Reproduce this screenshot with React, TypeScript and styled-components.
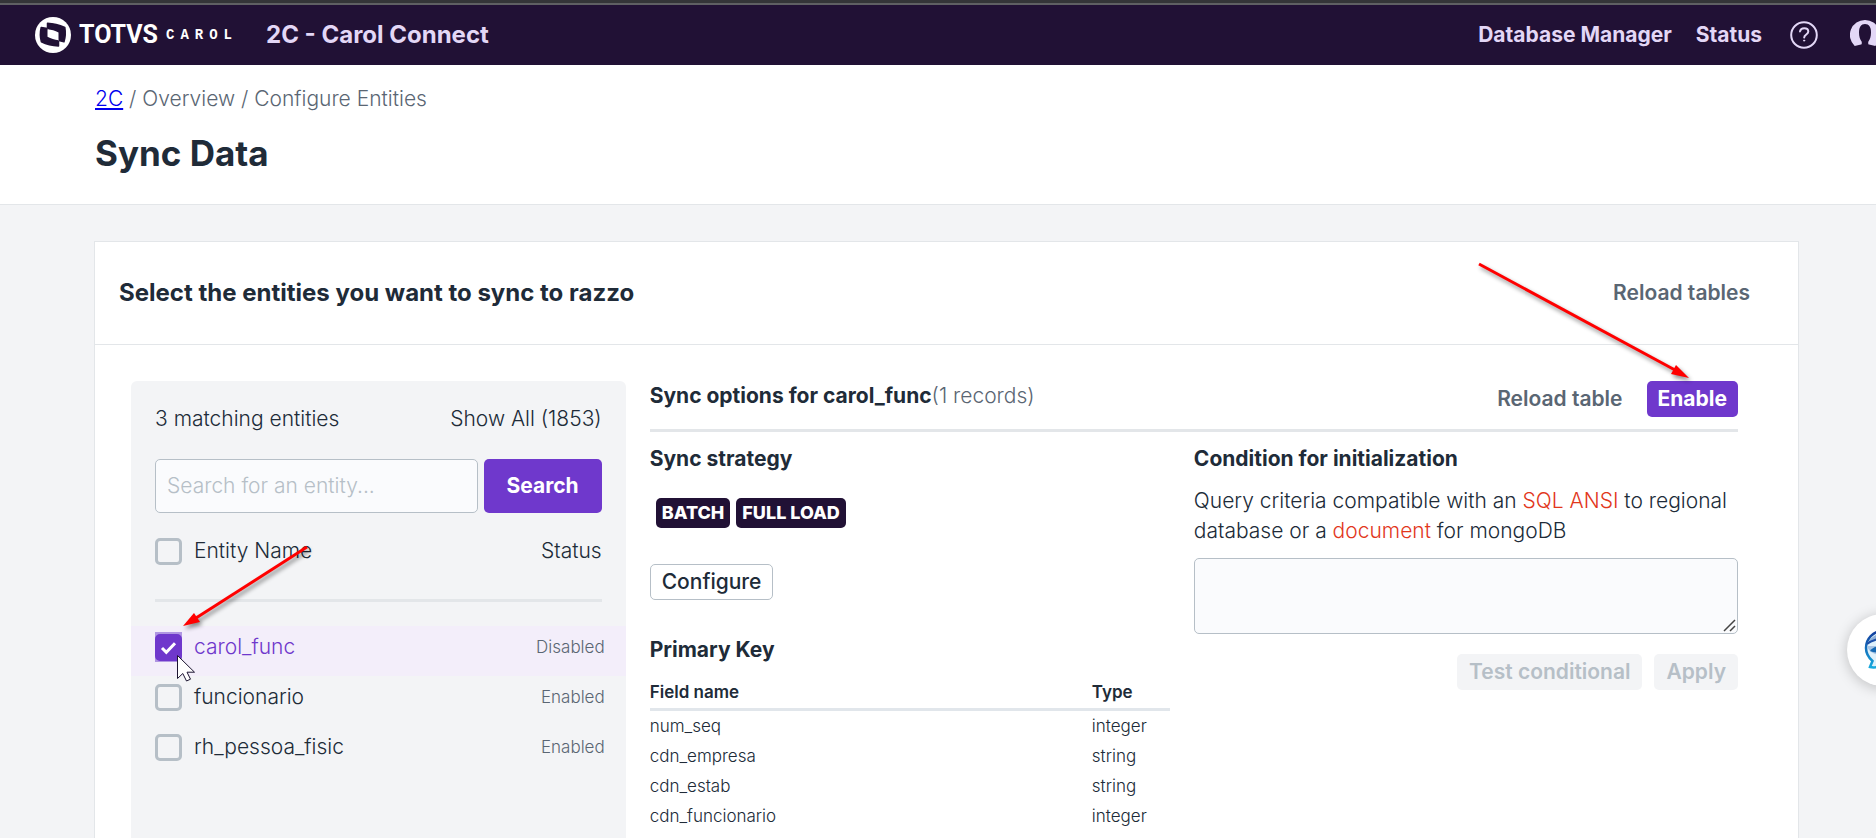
import React from 'react';
import styled, { createGlobalStyle } from 'styled-components';

const color = {
  ink: '#202b38',
  muted: '#5a6673',
  line: '#e3e6e9',
  border: '#b6bfc7',
  canvas: '#f3f4f6',
  field: '#fafbfd',
  purple: '#6f38cc',
  night: '#211135',
  lilac: '#e3d7f6',
  danger: '#e2371c',
};

const GlobalStyle = createGlobalStyle`
  *, *::before, *::after { box-sizing: border-box; }
  body {
    margin: 0;
    background: ${color.canvas};
    color: ${color.ink};
    font-family: Inter, "Liberation Sans", sans-serif;
    font-size: 21px;
    line-height: 30px;
    font-weight: 350;
  }
  h1, h2, h3, p { margin: 0; }
  button, input, textarea { font: inherit; color: inherit; }
`;

const Page = styled.div`
  position: relative;
  display: flex;
  flex-direction: column;
  min-height: 100vh;
  overflow: hidden;
`;

const WindowEdge = styled.div`
  height: 5px;
  background: #343538;
  border-bottom: 2px solid #5f6063;
`;

const TopBar = styled.header`
  display: flex;
  align-items: center;
  height: 60px;
  padding-left: 35px;
  background: ${color.night};
  color: ${color.lilac};
`;

const Brand = styled.a`
  display: flex;
  align-items: center;
  gap: 8px;
  color: #fff;
  text-decoration: none;
`;

const BrandName = styled.span`
  font: 700 25px/30px Roboto, sans-serif;
`;

const BrandProduct = styled.span`
  font: 700 14px/30px "Liberation Mono", monospace;
  letter-spacing: 6px;
`;

const AppName = styled.span`
  margin-left: 28px;
  font-size: 24px;
  font-weight: 700;
`;

const Nav = styled.nav`
  display: flex;
  align-items: center;
  gap: 24px;
  margin-left: auto;
  margin-right: -4px;
`;

const NavLink = styled.a`
  color: inherit;
  font-weight: 700;
  text-decoration: none;
`;

const NavIcon = styled.button`
  display: flex;
  margin-left: 4px;
  padding: 0;
  border: 0;
  background: none;
  color: inherit;

  & + & { margin-left: 8px; }
`;

const PageHead = styled.div`
  height: 140px;
  padding: 19px 95px 0;
  background: #fff;
  border-bottom: 1px solid ${color.line};
`;

const Crumbs = styled.nav`
  color: ${color.muted};
`;

const CrumbLink = styled.a`
  color: #0000ee;
`;

const PageTitle = styled.h1`
  margin-top: 19px;
  font-size: 35px;
  line-height: 40px;
  font-weight: 700;
`;

const Card = styled.main`
  display: flex;
  flex-direction: column;
  flex: 1;
  margin: 36px 77px 0 94px;
  background: #fff;
  border: 1px solid ${color.line};
  border-bottom: 0;
`;

const CardHead = styled.div`
  display: flex;
  align-items: center;
  justify-content: space-between;
  height: 103px;
  padding: 0 48px 0 24px;
  border-bottom: 1px solid ${color.line};
`;

const CardTitle = styled.h2`
  font-size: 24px;
  font-weight: 700;
`;

const CardBody = styled.div`
  display: grid;
  flex: 1;
  grid-template-columns: minmax(0, 5fr) minmax(0, 11fr);
  gap: 24px;
  padding: 36px 60px 0 36px;
`;

const Button = styled.button<{ $kind: 'plain' | 'primary' | 'outline' }>`
  height: 36px;
  padding: 0 ${(p) => (p.$kind === 'plain' ? 0 : 11)}px;
  border: ${(p) => (p.$kind === 'outline' ? `1px solid ${color.border}` : '0')};
  border-radius: 5px;
  background: ${(p) => (p.$kind === 'primary' ? color.purple : p.$kind === 'outline' ? '#fff' : 'none')};
  color: ${(p) => (p.$kind === 'primary' ? '#fff' : p.$kind === 'outline' ? color.ink : color.muted)};
  font-weight: ${(p) => (p.$kind === 'primary' ? 700 : p.$kind === 'outline' ? 500 : 600)};
  line-height: 30px;
  white-space: nowrap;

  &:disabled {
    padding: 0 12px;
    background: ${color.canvas};
    color: ${color.border};
  }
`;

const EntityPanel = styled.section`
  padding-top: 23px;
  background: ${color.canvas};
  border-radius: 6px 6px 0 0;
`;

const PanelRow = styled.div`
  display: flex;
  align-items: center;
  justify-content: space-between;
  margin: 0 24px;
`;

const ShowAll = styled.button`
  padding: 0;
  border: 0;
  background: none;
`;

const SearchForm = styled.form`
  display: flex;
  gap: 6px;
  margin: 25px 24px 0;
`;

const SearchInput = styled.input`
  flex: 1;
  min-width: 0;
  height: 54px;
  padding: 0 11px 2px;
  border: 1px solid ${color.border};
  border-radius: 5px;
  background: ${color.field};
  outline: 0;

  &::placeholder { color: ${color.border}; opacity: 1; }
`;

const SearchButton = styled(Button)`
  height: 54px;
  padding: 0 23px;
`;

const ListHead = styled(PanelRow)`
  height: 89px;
  padding-bottom: 11px;
  border-bottom: 3px solid ${color.line};
  margin-bottom: 24px;
`;

const EntityRow = styled.div<{ $active?: boolean }>`
  display: flex;
  align-items: center;
  justify-content: space-between;
  height: 50px;
  padding: 0 21px 8px 24px;
  background: ${(p) => (p.$active ? '#f3eefa' : 'none')};
  color: ${(p) => (p.$active ? color.purple : color.ink)};
`;

const CheckLabel = styled.label`
  display: flex;
  align-items: center;
  gap: 12px;
`;

const CheckFrame = styled.span<{ $active?: boolean }>`
  position: relative;
  display: flex;
  padding: 2px 0 1px;
  background: ${(p) => (p.$active ? '#b096e2' : 'none')};
`;

const CheckBox = styled.input`
  appearance: none;
  width: 27px;
  height: 27px;
  margin: 0;
  border: 3px solid ${color.border};
  border-radius: 5px;
  background: ${color.canvas};

  &:checked {
    border-color: ${color.purple};
    background: ${color.purple};
  }
`;

const CheckMark = styled.svg`
  position: absolute;
  top: 2px;
  left: 0;
  pointer-events: none;
`;

const EntityStatus = styled.span`
  color: ${color.muted};
  font-size: 17px;
`;

const Options = styled.section``;

const OptionsHead = styled.div`
  display: flex;
  align-items: flex-start;
  justify-content: space-between;
  height: 51px;
  border-bottom: 3px solid ${color.line};
`;

const OptionsActions = styled.div`
  display: flex;
  gap: 24px;
`;

const SubTitle = styled.h3`
  font-size: 21px;
  line-height: 30px;
  font-weight: 650;
`;

const Records = styled.span`
  color: ${color.muted};
  font-weight: 350;
`;

const OptionsColumns = styled.div`
  display: grid;
  grid-template-columns: minmax(0, 1fr) minmax(0, 1fr);
  padding-top: 12px;
`;

const Strategy = styled.div`
  padding-right: 24px;
`;

const Badges = styled.div`
  display: flex;
  gap: 6px;
  margin: 24px 0 36px 6px;
`;

const Badge = styled.span`
  padding: 0 6px;
  border-radius: 5px;
  background: ${color.night};
  color: #fff;
  font-size: 18px;
  font-weight: 800;
`;

const KeyTitle = styled(SubTitle)`
  margin-top: 35px;
`;

const KeyTable = styled.table`
  width: 100%;
  margin-top: 12px;
  border-collapse: separate;
  border-spacing: 0;
  table-layout: fixed;
  font-size: 17px;
  line-height: 30px;
  font-weight: 300;
  text-align: left;

  th {
    height: 34px;
    padding: 0;
    border-bottom: 3px solid #e1e6eb;
    font-weight: 600;
    vertical-align: top;
  }
  th:first-child { width: 85%; }
  td { height: 30px; padding: 0; }
`;

const Hint = styled.p`
  margin-top: 12px;
`;

const HintLink = styled.a`
  color: ${color.danger};
  text-decoration: none;
`;

const ConditionInput = styled.textarea`
  display: block;
  width: 100%;
  height: 76px;
  margin-top: 12px;
  padding: 8px 12px;
  border: 1px solid ${color.border};
  border-radius: 5px;
  background: ${color.field};
  resize: vertical;

  &::-webkit-resizer {
    background: url("data:image/svg+xml,%3Csvg xmlns='http://www.w3.org/2000/svg' width='15' height='15'%3E%3Cpath d='M2 13L13 2M8 13l5-5' stroke='%23444' stroke-width='1.500'/%3E%3C/svg%3E") no-repeat;
  }
`;

const ConditionActions = styled.div`
  display: flex;
  justify-content: flex-end;
  gap: 12px;
  margin-top: 20px;
`;

const ChatButton = styled.button`
  position: absolute;
  top: 614px;
  right: -43px;
  width: 72px;
  height: 72px;
  padding: 0;
  border: 0;
  border-radius: 50%;
  background: #fff;
  box-shadow: 0 2px 14px rgba(0, 0, 0, 0.22);
`;

const Overlay = styled.svg<{ $x: number; $y: number; $fromRight?: boolean }>`
  position: absolute;
  top: ${(p) => p.$y}px;
  ${(p) => (p.$fromRight ? 'right' : 'left')}: ${(p) => p.$x}px;
  overflow: visible;
  pointer-events: none;
`;

const RedArrow = styled(Overlay)`
  filter: drop-shadow(2px 3px 2px rgba(0, 0, 0, 0.45));
`;

const entities = [
  { name: 'carol_func', status: 'Disabled', active: true },
  { name: 'funcionario', status: 'Enabled', active: false },
  { name: 'rh_pessoa_fisic', status: 'Enabled', active: false },
];

const keys = [
  ['num_seq', 'integer'],
  ['cdn_empresa', 'string'],
  ['cdn_estab', 'string'],
  ['cdn_funcionario', 'integer'],
];

const BrandMark = () => (
  <svg width="36" height="36" viewBox="0 0 36 36" aria-hidden="true">
    <circle cx="18" cy="18" r="18" fill="#fff" />
    <g fill="none" stroke={color.night} strokeWidth="1.5" strokeLinejoin="round">
      <path d="M12.5 11.5V6.2c6 .2 11.500 1.600 17.300 4.200.8 4.800.7 9.500-.8 14.300l-5-1.200" fill={color.night} />
      <path d="M12.500 11.500L6.200 10.500c-1.200 5-1.200 9.500.2 14.200 5.600 2.700 11 3.900 17.100 4.300v-5.500" fill={color.night} />
    </g>
    <path d="M12.500 12.300c4 .4 7.500 1.500 11 3.200v7.800c-4-.7-7.500-1.800-11-3.600z" fill="#fff" />
  </svg>
);

const HelpIcon = () => (
  <svg width="28" height="28" viewBox="0 0 28 28" fill="none" stroke="currentColor" strokeLinecap="round" aria-hidden="true">
    <circle cx="14" cy="14" r="12.800" strokeWidth="2" />
    <path d="M10 10.400c.4-2 2-3.200 4.200-3.200 2.400 0 4.100 1.400 4.100 3.400 0 3-4.100 2.900-4.100 6" strokeWidth="2" />
    <circle cx="14.100" cy="19.600" r=".6" strokeWidth="1" fill="currentColor" />
  </svg>
);

const UserIcon = () => (
  <svg width="30" height="30" viewBox="0 0 30 30" aria-hidden="true">
    <path
      fill="currentColor"
      d="M15 0a15 15 0 0 0-10.300 26l6.300-1.400c.9-.3 1-1.800.6-3C10 19.500 9 16.500 9 12.500 9 7 11 4 15 4s6 3 6 8.500c0 4-1 7-2.600 9.100-.4 1.200-.3 2.700.6 3l6.300 1.400A15 15 0 0 0 15 0z"
    />
  </svg>
);

const ChatFace = () => (
  <svg width="72" height="72" viewBox="0 0 72 72" aria-hidden="true">
    <defs>
      <linearGradient id="face" x1="0" y1="0" x2="0" y2="1">
        <stop offset="0" stopColor="#123b9c" />
        <stop offset="1" stopColor="#16a9dd" />
      </linearGradient>
    </defs>
    <path
      d="M36 17c-10 0-17 8-17 17 0 6 3 10 6.500 13L23 53c6 1.500 9-1 13-1 10 0 17-8 17-18s-7-17-17-17z"
      fill="#dff1fb"
      stroke="url(#face)"
      strokeWidth="2.500"
    />
    <path d="M20 30c4-8 10-10 16-11v5c-6 1-12 3-16 6z" fill="#8fb0d8" />
    <path d="M20 30c5-4 10-5 16-6" fill="none" stroke="#1d4fa8" strokeWidth="2" />
    <path d="M20 32h16v9c-7 0-14-2-16-9z" fill="#a9c5e4" />
    <path d="M23 37c4-5 9-5 13-4v5c-5 1-9 1-13-1z" fill="#1468b3" />
  </svg>
);

const EntityCheck = ({ id, checked }: { id: string; checked?: boolean }) => (
  <CheckFrame $active={checked}>
    <CheckBox id={id} type="checkbox" defaultChecked={checked} />
    {checked && (
      <CheckMark width="27" height="27" viewBox="0 0 27 27">
        <path d="M7 14l4.300 4.300 8.700-9" fill="none" stroke="#fff" strokeWidth="3" />
      </CheckMark>
    )}
  </CheckFrame>
);

export default function App() {
  return (
    <>
      <GlobalStyle />
      <Page>
        <WindowEdge />
        <TopBar>
          <Brand href="#home">
            <BrandMark />
            <BrandName>TOTVS</BrandName>
            <BrandProduct>CAROL</BrandProduct>
          </Brand>
          <AppName>2C - Carol Connect</AppName>
          <Nav aria-label="Main">
            <NavLink href="#databases">Database Manager</NavLink>
            <NavLink href="#status">Status</NavLink>
            <NavIcon type="button" aria-label="Help">
              <HelpIcon />
            </NavIcon>
            <NavIcon type="button" aria-label="Account">
              <UserIcon />
            </NavIcon>
          </Nav>
        </TopBar>

        <PageHead>
          <Crumbs aria-label="Breadcrumb">
            <CrumbLink href="#2c">2C</CrumbLink> / Overview / Configure Entities
          </Crumbs>
          <PageTitle>Sync Data</PageTitle>
        </PageHead>

        <Card>
          <CardHead>
            <CardTitle>Select the entities you want to sync to razzo</CardTitle>
            <Button type="button" $kind="plain">Reload tables</Button>
          </CardHead>

          <CardBody>
            <EntityPanel aria-label="Entities">
              <PanelRow>
                <span>3 matching entities</span>
                <ShowAll type="button">Show All (1853)</ShowAll>
              </PanelRow>
              <SearchForm onSubmit={(e) => e.preventDefault()}>
                <SearchInput type="text" aria-label="Search for an entity" placeholder="Search for an entity..." />
                <SearchButton type="submit" $kind="primary">Search</SearchButton>
              </SearchForm>
              <ListHead>
                <CheckLabel htmlFor="all">
                  <EntityCheck id="all" />
                  Entity Name
                </CheckLabel>
                <span>Status</span>
              </ListHead>
              {entities.map((e) => (
                <EntityRow key={e.name} $active={e.active}>
                  <CheckLabel htmlFor={e.name}>
                    <EntityCheck id={e.name} checked={e.active} />
                    {e.name}
                  </CheckLabel>
                  <EntityStatus>{e.status}</EntityStatus>
                </EntityRow>
              ))}
            </EntityPanel>

            <Options>
              <OptionsHead>
                <SubTitle>
                  Sync options for carol_func<Records>(1 records)</Records>
                </SubTitle>
                <OptionsActions>
                  <Button type="button" $kind="plain">Reload table</Button>
                  <Button type="button" $kind="primary">Enable</Button>
                </OptionsActions>
              </OptionsHead>
              <OptionsColumns>
                <Strategy>
                  <SubTitle>Sync strategy</SubTitle>
                  <Badges>
                    <Badge>BATCH</Badge>
                    <Badge>FULL LOAD</Badge>
                  </Badges>
                  <Button type="button" $kind="outline">Configure</Button>
                  <KeyTitle>Primary Key</KeyTitle>
                  <KeyTable>
                    <thead>
                      <tr>
                        <th scope="col">Field name</th>
                        <th scope="col">Type</th>
                      </tr>
                    </thead>
                    <tbody>
                      {keys.map(([name, type]) => (
                        <tr key={name}>
                          <td>{name}</td>
                          <td>{type}</td>
                        </tr>
                      ))}
                    </tbody>
                  </KeyTable>
                </Strategy>
                <div>
                  <SubTitle as="label" htmlFor="condition">Condition for initialization</SubTitle>
                  <Hint>
                    Query criteria compatible with an <HintLink href="#sql">SQL ANSI</HintLink> to regional database
                    or a <HintLink href="#document">document</HintLink> for mongoDB
                  </Hint>
                  <ConditionInput id="condition" />
                  <ConditionActions>
                    <Button type="button" $kind="plain" disabled>Test conditional</Button>
                    <Button type="button" $kind="plain" disabled>Apply</Button>
                  </ConditionActions>
                </div>
              </OptionsColumns>
            </Options>
          </CardBody>
        </Card>

        <ChatButton type="button" aria-label="Chat">
          <ChatFace />
        </ChatButton>
        <RedArrow $x={187} $y={263} $fromRight width="210" height="115" viewBox="0 0 210 115" aria-hidden="true">
          <path d="M0 1L196 107" stroke="#f00" strokeWidth="3" />
          <path d="M210 115L197 102l-5 9z" fill="#f00" />
        </RedArrow>
        <RedArrow $x={183} $y={546} width="124" height="80" viewBox="0 0 124 80" aria-hidden="true">
          <path d="M124 1L13 72" stroke="#f00" strokeWidth="3" />
          <path d="M0 80L11 67l6 9z" fill="#f00" />
        </RedArrow>
        <Overlay $x={177} $y={655} width="19" height="28" viewBox="0 0 19 28" aria-hidden="true">
          <path d="M.5.5v23l5.300-5 3.700 7.500 4-1.800-3.500-7h7.500z" fill="#fff" stroke="#1b1430" />
        </Overlay>
      </Page>
    </>
  );
}
